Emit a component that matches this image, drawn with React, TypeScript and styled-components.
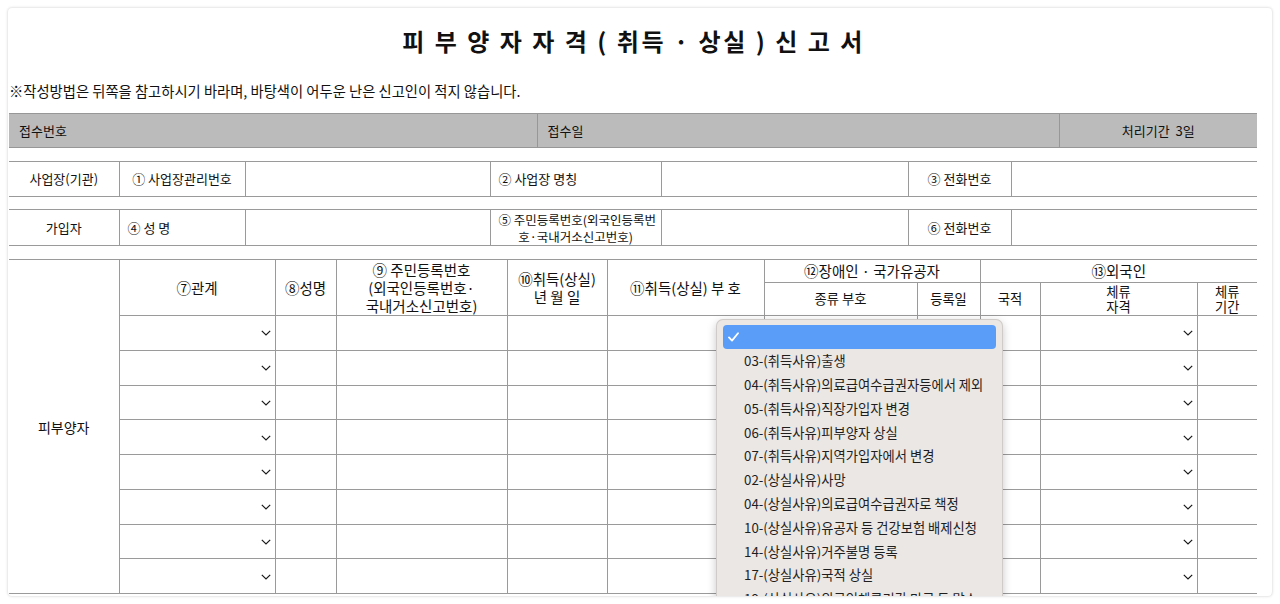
import React, { FC } from 'react';
import styled, { createGlobalStyle } from 'styled-components';

const GlobalStyle = createGlobalStyle`
    html, body {
        margin: 0;
        padding: 0;
        background: #ffffff;
    }
    body {
        font-family: "Noto Sans CJK KR", "Noto Sans", sans-serif;
        color: #111;
    }
`;

const Chevron: FC = () => (
    <svg width="10" height="6" viewBox="0 0 10 6">
        <path d="M0.8 0.8 L5 5 L9.2 0.8" fill="none" stroke="#1a1a1a" strokeWidth="1.2" />
    </svg>
);

const CheckMark: FC = () => (
    <svg width="11" height="10" viewBox="0 0 11 10">
        <path d="M1 5.4 L4 8.6 L10 1.2" fill="none" stroke="#ffffff" strokeWidth="1.8" strokeLinecap="round" strokeLinejoin="round" />
    </svg>
);

const reasons = [
    '',
    '03-(취득사유)출생',
    '04-(취득사유)의료급여수급권자등에서 제외',
    '05-(취득사유)직장가입자 변경',
    '06-(취득사유)피부양자 상실',
    '07-(취득사유)지역가입자에서 변경',
    '02-(상실사유)사망',
    '04-(상실사유)의료급여수급권자로 책정',
    '10-(상실사유)유공자 등 건강보험 배제신청',
    '14-(상실사유)거주불명 등록',
    '17-(상실사유)국적 상실',
    '19-(상실사유)외국인체류기간 만료 등 말소',
];

const bodyRows = Array.from({ length: 8 }, (_, i) => i);

export default function App() {
    return (
        <>
            <GlobalStyle />
            <Frame>
                <Title>피 부 양 자 자 격 ( 취득 · 상실 ) 신 고 서</Title>
                <Notice>※작성방법은 뒤쪽을 참고하시기 바라며, 바탕색이 어두운 난은 신고인이 적지 않습니다.</Notice>

                <FormTable>
                    <colgroup>
                        <Col $w={528} />
                        <Col $w={522} />
                        <Col $w={198} />
                    </colgroup>
                    <tbody>
                        <ReceiptRow>
                            <ReceiptCell>접수번호</ReceiptCell>
                            <ReceiptCell>접수일</ReceiptCell>
                            <ReceiptCell $center>처리기간&nbsp;&nbsp;3일</ReceiptCell>
                        </ReceiptRow>
                    </tbody>
                </FormTable>

                <FormTable $gap={13}>
                    <colgroup>
                        <Col $w={110} />
                        <Col $w={126} />
                        <Col $w={245} />
                        <Col $w={171} />
                        <Col $w={247} />
                        <Col $w={103} />
                        <Col $w={246} />
                    </colgroup>
                    <tbody>
                        <InfoRow $h={35}>
                            <Cell $center>사업장(기관)</Cell>
                            <Cell $center>① 사업장관리번호</Cell>
                            <Cell />
                            <Cell>② 사업장 명칭</Cell>
                            <Cell />
                            <Cell $center>③ 전화번호</Cell>
                            <Cell />
                        </InfoRow>
                    </tbody>
                </FormTable>

                <FormTable $gap={12}>
                    <colgroup>
                        <Col $w={110} />
                        <Col $w={126} />
                        <Col $w={245} />
                        <Col $w={171} />
                        <Col $w={247} />
                        <Col $w={103} />
                        <Col $w={246} />
                    </colgroup>
                    <tbody>
                        <InfoRow $h={36}>
                            <Cell $center>가입자</Cell>
                            <Cell>④ 성 명</Cell>
                            <Cell />
                            <Cell $center $tight>⑤ 주민등록번호(외국인등록번<br />호·국내거소신고번호)</Cell>
                            <Cell />
                            <Cell $center>⑥ 전화번호</Cell>
                            <Cell />
                        </InfoRow>
                    </tbody>
                </FormTable>

                <FormTable $gap={13}>
                    <colgroup>
                        <Col $w={110} />
                        <Col $w={156} />
                        <Col $w={61} />
                        <Col $w={171} />
                        <Col $w={100} />
                        <Col $w={157} />
                        <Col $w={153} />
                        <Col $w={63} />
                        <Col $w={60} />
                        <Col $w={157} />
                        <Col $w={60} />
                    </colgroup>
                    <tbody>
                        <HeadRow $h={23}>
                            <GroupCell rowSpan={10}>피부양자</GroupCell>
                            <HeadCell rowSpan={2}>⑦관계</HeadCell>
                            <HeadCell rowSpan={2}>⑧성명</HeadCell>
                            <HeadCell rowSpan={2} $lines>⑨ 주민등록번호<br />(외국인등록번호·<br />국내거소신고번호)</HeadCell>
                            <HeadCell rowSpan={2} $lines>⑩취득(상실)<br />년 월 일</HeadCell>
                            <HeadCell rowSpan={2}>⑪취득(상실) 부 호</HeadCell>
                            <HeadCell colSpan={2}>⑫장애인 · 국가유공자</HeadCell>
                            <HeadCell colSpan={3}>⑬외국인</HeadCell>
                        </HeadRow>
                        <HeadRow $h={33}>
                            <SubHeadCell>종류 부호</SubHeadCell>
                            <SubHeadCell>등록일</SubHeadCell>
                            <SubHeadCell>국적</SubHeadCell>
                            <SubHeadCell>체류<br />자격</SubHeadCell>
                            <SubHeadCell>체류<br />기간</SubHeadCell>
                        </HeadRow>
                        {bodyRows.map((i) => (
                            <BodyRow key={i}>
                                <Cell><SelectBox><Chevron /></SelectBox></Cell>
                                <Cell />
                                <Cell />
                                <Cell />
                                <Cell><SelectBox><Chevron /></SelectBox></Cell>
                                <Cell />
                                <Cell />
                                <Cell />
                                <Cell><SelectBox><Chevron /></SelectBox></Cell>
                                <Cell />
                            </BodyRow>
                        ))}
                    </tbody>
                </FormTable>

                <Menu>
                    {reasons.map((label, i) => (
                        <MenuItem key={i} $active={i === 0}>
                            <CheckSlot>{i === 0 && <CheckMark />}</CheckSlot>
                            {label}
                        </MenuItem>
                    ))}
                </Menu>
            </Frame>
        </>
    );
}

const Frame = styled.div`
    position: relative;
    margin: 8px;
    height: 588px;
    padding-left: 1px;
    overflow: hidden;
    background: #ffffff;
    border-radius: 4px;
    box-shadow: 0 0 3px rgba(0, 0, 0, 0.22);
`;

const Title = styled.h1`
    margin: 18px 0 0;
    padding-right: 14px;
    height: 30px;
    line-height: 30px;
    text-align: center;
    font-size: 24px;
    font-weight: 700;
    letter-spacing: 2.5px;
    color: #111;
`;

const Notice = styled.div`
    margin-top: 26px;
    height: 18px;
    line-height: 18px;
    font-size: 14.3px;
    color: #111;
`;

const FormTable = styled.table<{ $gap?: number }>`
    margin-top: ${({ $gap }) => $gap ?? 13}px;
    width: 1248px;
    table-layout: fixed;
    border-collapse: collapse;
    font-size: 13px;
`;

const Col = styled.col<{ $w: number }>`
    width: ${({ $w }) => $w}px;
`;

const ReceiptRow = styled.tr`
    height: 34px;
    background: #bbbbbb;
    border-top: 1px solid #979797;
    border-bottom: 1px solid #979797;
`;

const ReceiptCell = styled.td<{ $center?: boolean }>`
    padding: 0 10px;
    text-align: ${({ $center }) => ($center ? 'center' : 'left')};
    font-size: 13px;
    border-left: 1px solid #979797;

    &:first-child {
        border-left: none;
    }
`;

const InfoRow = styled.tr<{ $h: number }>`
    height: ${({ $h }) => $h}px;
    border-top: 1px solid #9a9a9a;
    border-bottom: 1px solid #9a9a9a;
`;

const Cell = styled.td<{ $center?: boolean; $tight?: boolean }>`
    padding: 0 8px;
    text-align: ${({ $center }) => ($center ? 'center' : 'left')};
    line-height: ${({ $tight }) => ($tight ? '17px' : '18px')};
    font-size: ${({ $tight }) => ($tight ? '12.5px' : '13px')};
    border: 1px solid #9a9a9a;
    white-space: nowrap;

    &:first-child {
        border-left: none;
    }
    &:last-child {
        border-right: none;
    }
`;

const GroupCell = styled.td`
    padding: 0;
    text-align: center;
    font-size: 14px;
    border: 1px solid #9a9a9a;
    border-left: none;
`;

const HeadRow = styled.tr<{ $h: number }>`
    height: ${({ $h }) => $h}px;
`;

const HeadCell = styled.td<{ $lines?: boolean }>`
    padding: 0;
    text-align: center;
    font-size: 14.5px;
    line-height: ${({ $lines }) => ($lines ? '18px' : '20px')};
    border: 1px solid #9a9a9a;
    white-space: nowrap;

    &:last-child {
        border-right: none;
    }
`;

const SubHeadCell = styled.td`
    padding: 0;
    text-align: center;
    font-size: 13.3px;
    line-height: 15.5px;
    border: 1px solid #9a9a9a;
    white-space: nowrap;

    &:last-child {
        border-right: none;
    }
`;

const BodyRow = styled.tr`
    height: 34.75px;
`;

const SelectBox = styled.div`
    display: flex;
    align-items: center;
    justify-content: flex-end;
    height: 100%;
    margin-right: -4px;
    padding-top: 1px;
`;

const Menu = styled.div`
    position: absolute;
    left: 708px;
    top: 311px;
    width: 273px;
    padding: 5px 6px;
    background: #ebe7e4;
    border: 1px solid rgba(0, 0, 0, 0.12);
    border-radius: 7px;
    box-shadow: 0 3px 10px rgba(0, 0, 0, 0.22);
    font-family: "Noto Sans CJK KR", "Noto Sans", sans-serif;
`;

const MenuItem = styled.div<{ $active?: boolean }>`
    display: flex;
    align-items: center;
    height: 23.8px;
    border-radius: 4px;
    font-size: 13.3px;
    color: #1e1e1e;
    white-space: nowrap;
    background: ${({ $active }) => ($active ? '#5a9df8' : 'transparent')};
`;

const CheckSlot = styled.span`
    display: flex;
    align-items: center;
    width: 21px;
    padding-left: 5px;
    box-sizing: border-box;
`;
